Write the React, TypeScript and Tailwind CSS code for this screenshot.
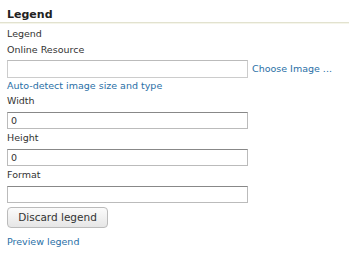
export default function App() {
  const label = "block text-[9.5px] leading-[12px] text-[#333]";
  const link = "block text-[9.5px] leading-[12px] text-[#2a6fa6]";
  const input =
    "block h-[17px] w-[241px] border border-[#bbb] border-t-[#888] bg-white px-[3px] text-[9.5px] text-[#333] outline-none";
  return (
    <div className="h-[263px] w-[349px] bg-white font-['DejaVu_Sans',sans-serif] text-[#333]">
      <div className="px-[7px] pt-[8px]">
        <h2 className="text-[11px] font-bold leading-[13px] text-[#222]">Legend</h2>
      </div>
      <div className="mt-[1px] h-[2px] border-t border-[#e2e2cf] bg-[#f5f5ea]" />
      <div className="flex flex-col px-[7px]">
        <span className={`${label} mt-[4px]`}>Legend</span>
        <span className={`${label} mt-[4px]`}>Online Resource</span>
        <div className="mt-[4px] flex items-center gap-[4px]">
          <input className={`${input} h-[18px] border-[#ccc] border-t-[#bbb]`} defaultValue="" />
          <a className="text-[9.5px] text-[#2a6fa6]">Choose Image ...</a>
        </div>
        <a className={`${link} mt-[2px]`}>Auto-detect image size and type</a>
        <span className={`${label} mt-[3px]`}>Width</span>
        <input className={`${input} mt-[5px]`} defaultValue="0" />
        <span className={`${label} mt-[3px]`}>Height</span>
        <input className={`${input} mt-[5px]`} defaultValue="0" />
        <span className={`${label} mt-[3px]`}>Format</span>
        <input className={`${input} mt-[5px]`} defaultValue="" />
        <button className="mt-[4px] h-[21px] w-[101px] rounded-[4px] border border-[#bbb] bg-gradient-to-b from-[#fbfbfb] to-[#e6e6e6] text-[10.5px] text-[#333]">
          Discard legend
        </button>
        <a className={`${link} mt-[8px]`}>Preview legend</a>
      </div>
    </div>
  );
}
